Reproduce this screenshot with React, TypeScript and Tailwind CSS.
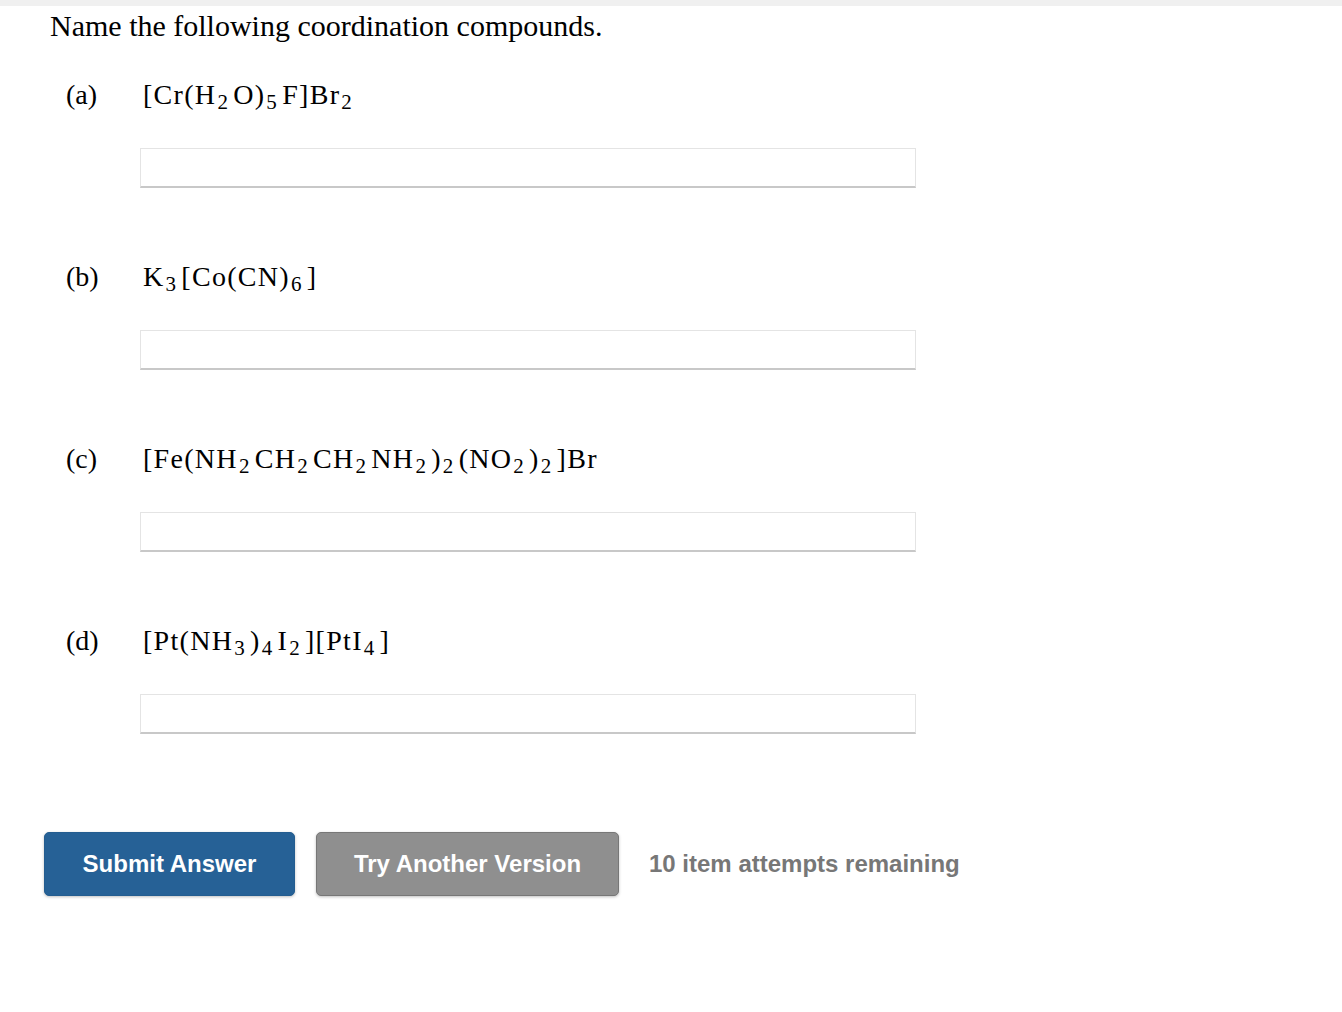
import React from 'react';

const Sub: React.FC<{ children: React.ReactNode }> = ({ children }) => (
  <sub className="relative bottom-0 top-[5px] text-[21px] leading-none align-baseline ml-[1px] mr-[4px]">{children}</sub>
);

interface Item {
  label: string;
  formula: React.ReactNode;
}

const items: Item[] = [
  {
    label: '(a)',
    formula: (
      <>
        [Cr(H<Sub>2</Sub>O)<Sub>5</Sub>F]Br<Sub>2</Sub>
      </>
    ),
  },
  {
    label: '(b)',
    formula: (
      <>
        K<Sub>3</Sub>[Co(CN)<Sub>6</Sub>]
      </>
    ),
  },
  {
    label: '(c)',
    formula: (
      <>
        [Fe(NH<Sub>2</Sub>CH<Sub>2</Sub>CH<Sub>2</Sub>NH<Sub>2</Sub>)<Sub>2</Sub>(NO<Sub>2</Sub>)<Sub>2</Sub>]Br
      </>
    ),
  },
  {
    label: '(d)',
    formula: (
      <>
        [Pt(NH<Sub>3</Sub>)<Sub>4</Sub>I<Sub>2</Sub>][PtI<Sub>4</Sub>]
      </>
    ),
  },
];

const App: React.FC = () => {
  return (
    <div className="min-h-screen w-full bg-white">
      <div className="h-[6px] w-full bg-[#f0f0f0]" />
      <div className="pl-[50px] font-['Liberation_Serif','Times_New_Roman',serif] text-black">
        <h1 className="text-[30px] leading-[40px] font-normal">Name the following coordination compounds.</h1>

        <div className="mt-[29px] flex flex-col">
          {items.map(item => (
            <div key={item.label} className="flex flex-col mb-[69px]">
              <div className="flex items-center h-[40px] text-[28px]">
                <span className="ml-[16px] w-[77px]">{item.label}</span>
                <span className="tracking-[1.3px]">{item.formula}</span>
              </div>
              <input
                type="text"
                className="mt-[33px] ml-[90px] w-[776px] h-[40px] border border-[#e4e4e4] border-b-2 border-b-[#c8c8c8] bg-white outline-none px-2 text-[18px]"
              />
            </div>
          ))}
        </div>
      </div>

      <div className="mt-[29px] pl-[44px] flex items-center font-['Liberation_Sans',Arial,sans-serif] font-bold text-[24px]">
        <button
          type="button"
          className="w-[251px] h-[64px] rounded-[5px] bg-[#266196] border border-[#245d90] text-white shadow-[0_1px_3px_rgba(0,0,0,0.25)]"
        >
          Submit Answer
        </button>
        <button
          type="button"
          className="ml-[21px] w-[303px] h-[64px] rounded-[5px] bg-[#8f8f8f] border border-[#777777] text-white shadow-[0_1px_3px_rgba(0,0,0,0.25)]"
        >
          Try Another Version
        </button>
        <span className="ml-[30px] text-[#777777]">10 item attempts remaining</span>
      </div>
    </div>
  );
};

export default App;
